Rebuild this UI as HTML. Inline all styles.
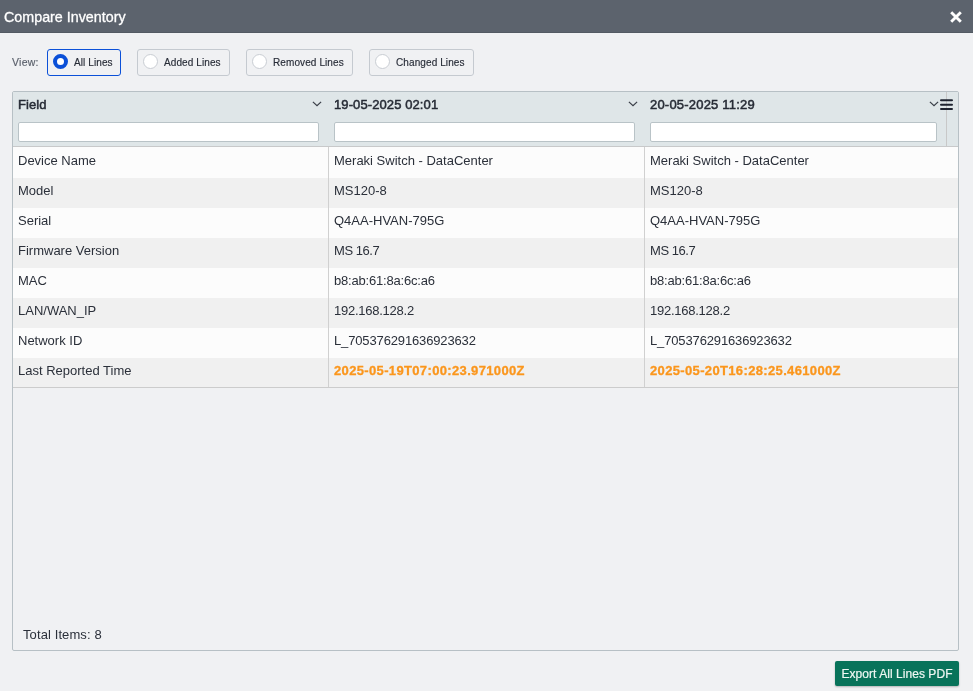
<!DOCTYPE html>
<html>
<head>
<meta charset="utf-8">
<style>
*{box-sizing:border-box;margin:0;padding:0}
html,body{width:973px;height:691px;overflow:hidden;-webkit-font-smoothing:antialiased;background:#f0f1f3;font-family:"Liberation Sans",sans-serif;color:#2b303a}
.title{position:absolute;left:0;top:0;width:973px;height:33px;background:#5c636d;border-bottom:1px solid #535a63}
.title .t{position:absolute;left:4px;top:9px;font-size:14.3px;line-height:16px;color:#fff;-webkit-text-stroke:0.3px #fff}
.title .x{position:absolute;left:949px;top:10px;width:14px;height:14px}
.view{position:absolute;left:12px;top:56px;font-size:10.5px;line-height:12px;color:#595f6a;letter-spacing:0.25px;-webkit-text-stroke:0.15px #595f6a}
.rb{position:absolute;top:49px;height:27px;border:1px solid #c5cad0;border-radius:3px}
.rb.sel{border-color:#0b50d8}
.rb .c{position:absolute;left:5px;top:4px;width:15px;height:15px;border-radius:50%;background:#fff;border:1px solid #c8ccd2}
.rb.sel .c{border:4px solid #0b50d8}
.rb .l{position:absolute;top:7px;font-size:10px;line-height:12px;color:#272c37;white-space:nowrap;letter-spacing:0.1px;-webkit-text-stroke:0.15px #272c37}
.tbl{position:absolute;left:12px;top:91px;width:947px;height:560px;border:1px solid #b7c0c5;border-radius:2px;overflow:hidden}
.hdr{position:absolute;left:0;top:0;width:945px;height:55px;background:#dfe6e8;border-bottom:1px solid #c8c9ca}
.hc{position:absolute;top:0;height:54px}
.hc .h{position:absolute;top:5px;font-size:13px;line-height:16px;font-weight:normal;color:#262b35;white-space:nowrap;-webkit-text-stroke:0.5px #262b35}
.hc .f{position:absolute;top:30px;height:20px;background:#fff;border:1px solid #b9c3c7;border-radius:2px}
.chev{position:absolute;top:8.6px;width:10px;height:6px}
.gut{position:absolute;left:933px;top:0;width:1px;height:54px;background:#c8c8c8}
.ham{position:absolute;left:927px;top:6px;width:13px;height:12px}
.row{position:absolute;left:0;width:945px;height:30px;background:#fcfcfc}
.row.g{background:#f0f0f0}
.row.r1 .c{top:1px}
.row .c{position:absolute;top:0;height:30px;font-size:13px;line-height:26px;white-space:nowrap;color:#2b303a}
.vl{position:absolute;width:1px;background:#d0d0d0}
.bot{position:absolute;left:0;top:295px;width:945px;height:1px;background:#cccccc}
.orange{color:#fb961c !important;font-weight:bold;font-size:13px !important;letter-spacing:0.35px;-webkit-text-stroke:0.3px #fb961c}
.total{position:absolute;left:10px;top:535px;font-size:13px;line-height:16px;color:#2b303a;letter-spacing:0.1px}
.exp{position:absolute;left:835px;top:661px;width:124px;height:25px;background:#08735a;border-radius:2px;box-shadow:0 1px 2px rgba(0,0,0,0.25);color:#eef7f3;font-size:12px;line-height:27px;text-align:center;text-indent:0px;letter-spacing:0.05px;-webkit-text-stroke:0.2px #eef7f3}
</style>
</head>
<body><div id="root" style="position:absolute;left:0;top:0;width:973px;height:691px;will-change:transform">
<div class="title">
  <div class="t">Compare Inventory</div>
  <svg class="x" viewBox="0 0 14 14"><path d="M2.2 2.2 L11.8 11.8 M11.8 2.2 L2.2 11.8" stroke="#fff" stroke-width="2.9"/></svg>
</div>

<div class="view">View:</div>
<div class="rb sel" style="left:47px;width:74px"><div class="c"></div><div class="l" style="left:26px">All Lines</div></div>
<div class="rb" style="left:137px;width:93px"><div class="c"></div><div class="l" style="left:26px">Added Lines</div></div>
<div class="rb" style="left:246px;width:107px"><div class="c"></div><div class="l" style="left:26px">Removed Lines</div></div>
<div class="rb" style="left:369px;width:105px"><div class="c"></div><div class="l" style="left:26px">Changed Lines</div></div>

<div class="tbl">
  <div class="hdr">
    <div class="hc" style="left:0;width:316px">
      <div class="h" style="left:5px;letter-spacing:0.1px">Field</div>
      <svg class="chev" style="left:299px" viewBox="0 0 10 6"><path d="M0.9 0.9 L5 4.6 L9.1 0.9" fill="none" stroke="#3a3f48" stroke-width="1.25"/></svg>
      <div class="f" style="left:5px;width:301px"></div>
    </div>
    <div class="hc" style="left:316px;width:316px">
      <div class="h" style="left:5px;letter-spacing:0.1px">19-05-2025 02:01</div>
      <svg class="chev" style="left:299px" viewBox="0 0 10 6"><path d="M0.9 0.9 L5 4.6 L9.1 0.9" fill="none" stroke="#3a3f48" stroke-width="1.25"/></svg>
      <div class="f" style="left:5px;width:301px"></div>
    </div>
    <div class="hc" style="left:632px;width:301px">
      <div class="h" style="left:5px;letter-spacing:0.2px">20-05-2025 11:29</div>
      <svg class="chev" style="left:284px" viewBox="0 0 10 6"><path d="M0.9 0.9 L5 4.6 L9.1 0.9" fill="none" stroke="#3a3f48" stroke-width="1.25"/></svg>
      <div class="f" style="left:5px;width:287px"></div>
    </div>
    <div class="gut"></div>
    <svg class="ham" viewBox="0 0 13 12"><path d="M1 2.3 H12 M1 6.7 H12 M1 10.9 H12" stroke="#1f2430" stroke-width="2" stroke-linecap="round"/></svg>
  </div>

  <div class="row r1" style="top:55px;height:31px"><div class="c" style="left:5px">Device Name</div><div class="c" style="left:321px">Meraki Switch - DataCenter</div><div class="c" style="left:637px">Meraki Switch - DataCenter</div></div>
  <div class="row g" style="top:86px"><div class="c" style="left:5px">Model</div><div class="c" style="left:321px">MS120-8</div><div class="c" style="left:637px">MS120-8</div></div>
  <div class="row" style="top:116px"><div class="c" style="left:5px">Serial</div><div class="c" style="left:321px">Q4AA-HVAN-795G</div><div class="c" style="left:637px">Q4AA-HVAN-795G</div></div>
  <div class="row g" style="top:146px"><div class="c" style="left:5px">Firmware Version</div><div class="c" style="left:321px;letter-spacing:-0.45px">MS 16.7</div><div class="c" style="left:637px;letter-spacing:-0.45px">MS 16.7</div></div>
  <div class="row" style="top:176px"><div class="c" style="left:5px">MAC</div><div class="c" style="left:321px;letter-spacing:-0.2px">b8:ab:61:8a:6c:a6</div><div class="c" style="left:637px;letter-spacing:-0.2px">b8:ab:61:8a:6c:a6</div></div>
  <div class="row g" style="top:206px"><div class="c" style="left:5px">LAN/WAN_IP</div><div class="c" style="left:321px;letter-spacing:-0.25px">192.168.128.2</div><div class="c" style="left:637px;letter-spacing:-0.25px">192.168.128.2</div></div>
  <div class="row" style="top:236px"><div class="c" style="left:5px">Network ID</div><div class="c" style="left:321px;letter-spacing:-0.14px">L_705376291636923632</div><div class="c" style="left:637px;letter-spacing:-0.14px">L_705376291636923632</div></div>
  <div class="row g" style="top:266px;height:29px"><div class="c" style="left:5px">Last Reported Time</div><div class="c orange" style="left:321px">2025-05-19T07:00:23.971000Z</div><div class="c orange" style="left:637px">2025-05-20T16:28:25.461000Z</div></div>
  <div class="vl" style="left:315px;top:55px;height:240px"></div>
  <div class="vl" style="left:631px;top:55px;height:240px"></div>
  <div class="bot"></div>
  <div class="total">Total Items: 8</div>
</div>

<div class="exp">Export All Lines PDF</div>
</div></body>
</html>
